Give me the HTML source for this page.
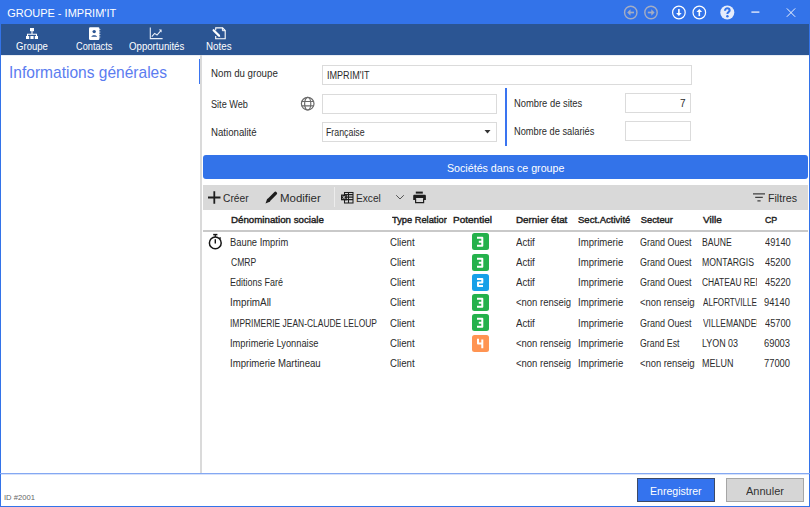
<!DOCTYPE html>
<html><head><meta charset="utf-8"><style>
html,body{margin:0;padding:0;}
body{width:810px;height:507px;overflow:hidden;position:relative;background:#fff;font-family:"Liberation Sans",sans-serif;}
.a{position:absolute;}
.t{position:absolute;white-space:nowrap;line-height:normal;}
.t span{display:inline-block;transform-origin:0 0;}
svg{position:absolute;}
</style></head><body>
<!-- window frame -->
<div class="a" style="left:0;top:0;width:810px;height:24px;background:#3373e9"></div>
<div class="a" style="left:0;top:24px;width:810px;height:31px;background:#2b5593"></div>
<div class="a" style="left:1px;top:55px;width:808px;height:1px;background:#e9edf4"></div>
<div class="a" style="left:0;top:0;width:1px;height:507px;background:#3373e9"></div>
<div class="a" style="left:809px;top:0;width:1px;height:507px;background:#3373e9"></div>
<div class="a" style="left:0;top:506px;width:810px;height:1px;background:#3373e9"></div>
<!-- dividers -->
<div class="a" style="left:200px;top:55px;width:2px;height:418px;background:#dadada"></div>
<div class="a" style="left:199px;top:59px;width:1px;height:25px;background:#3a74f0"></div>
<div class="a" style="left:0;top:473px;width:810px;height:1px;background:#84a8f2"></div>
<div class="a" style="left:1px;top:474px;width:808px;height:1px;background:#d6e2fb"></div>
<!-- inputs -->
<div class="a" style="left:322px;top:65px;width:368px;height:18px;border:1px solid #dbdbdb"></div>
<div class="a" style="left:322px;top:94px;width:173px;height:18px;border:1px solid #dbdbdb"></div>
<div class="a" style="left:322px;top:122px;width:173px;height:18px;border:1px solid #dbdbdb"></div>
<div class="a" style="left:625px;top:93px;width:64px;height:18px;border:1px solid #dbdbdb"></div>
<div class="a" style="left:625px;top:121px;width:64px;height:18px;border:1px solid #dbdbdb"></div>
<div class="a" style="left:505px;top:88px;width:2px;height:58px;background:#3a74f0"></div>
<svg style="left:484px;top:129px" width="7" height="5" viewBox="0 0 7 5"><path d="M0.5 1H6.5L3.5 4.5Z" fill="#333"/></svg>
<!-- blue bar -->
<div class="a" style="left:203px;top:155px;width:605px;height:24px;background:#3373e9;border-radius:3px"></div>
<!-- toolbar -->
<div class="a" style="left:203px;top:185px;width:605px;height:25px;background:#d9d9d9"></div>
<div class="a" style="left:334px;top:187px;width:1px;height:20px;background:#ececec"></div>
<!-- header line -->
<div class="a" style="left:203px;top:230px;width:605px;height:2px;background:#c9c9c9"></div>
<!-- buttons -->
<div class="a" style="left:637px;top:478px;width:76px;height:22px;background:#3473ee;border:1px solid #3d4a66"></div>
<div class="a" style="left:726px;top:478px;width:76px;height:22px;background:#d6d6d6;border:1px solid #a6a6a6"></div>

<!-- titlebar icons -->
<svg style="left:622px;top:4px" width="18" height="18" viewBox="0 0 18 18"><circle cx="8.75" cy="8.5" r="6.2" fill="none" stroke="#a4adc4" stroke-width="1.4"/><path d="M7 8.5H12" stroke="#a4adc4" stroke-width="1.7"/><path d="M5.2 8.5L8.5 5.3V11.7Z" fill="#a4adc4"/></svg>
<svg style="left:642px;top:4px" width="18" height="18" viewBox="0 0 18 18"><circle cx="9" cy="8.5" r="6.2" fill="none" stroke="#a4adc4" stroke-width="1.4"/><path d="M5.8 8.5H10.8" stroke="#a4adc4" stroke-width="1.7"/><path d="M12.6 8.5L9.3 5.3V11.7Z" fill="#a4adc4"/></svg>
<svg style="left:670px;top:4px" width="18" height="18" viewBox="0 0 18 18"><circle cx="8.9" cy="8.5" r="6.3" fill="none" stroke="#fff" stroke-width="1.2"/><path d="M8.9 4.9V10" stroke="#fff" stroke-width="1.6"/><path d="M8.9 11.9L6.1 9.1H11.7Z" fill="#fff"/></svg>
<svg style="left:690px;top:4px" width="18" height="18" viewBox="0 0 18 18"><circle cx="9.3" cy="8.5" r="6.3" fill="none" stroke="#fff" stroke-width="1.2"/><path d="M9.3 12.1V7" stroke="#fff" stroke-width="1.6"/><path d="M9.3 5.1L6.5 7.9H12.1Z" fill="#fff"/></svg>
<svg style="left:718px;top:4px" width="18" height="18" viewBox="0 0 18 18"><circle cx="9.3" cy="8.5" r="7" fill="#e6ecfb"/><path d="M7 6.7C7 5.1 8.1 4.3 9.3 4.3C10.6 4.3 11.6 5.1 11.6 6.4C11.6 8 9.4 8.1 9.4 9.9" fill="none" stroke="#3373e9" stroke-width="2.1"/><circle cx="9.4" cy="12.3" r="1.25" fill="#3373e9"/></svg>
<svg style="left:750px;top:8px" width="12" height="8" viewBox="0 0 12 8"><path d="M1.4 4.1H9.4" stroke="#e3eafb" stroke-width="1.4"/></svg>
<svg style="left:784px;top:6px" width="14" height="14" viewBox="0 0 14 14"><path d="M2.8 2.4L11.2 10.8M11.2 2.4L2.8 10.8" stroke="#f0f4fd" stroke-width="1"/></svg>
<!-- nav icons -->
<svg style="left:24px;top:26px" width="16" height="15" viewBox="0 0 16 15"><rect x="6" y="2" width="4" height="3.2" fill="#fff"/><path d="M8 5V8M3.5 10V8.2H12.5V10" fill="none" stroke="#fff" stroke-width="1.1"/><rect x="2" y="10" width="3.2" height="3" fill="#fff"/><rect x="6.4" y="10" width="3.2" height="3" fill="#fff"/><rect x="10.8" y="10" width="3.2" height="3" fill="#fff"/></svg>
<svg style="left:87px;top:26px" width="15" height="15" viewBox="0 0 15 15"><rect x="2" y="1.3" width="10.4" height="12.6" rx="1.2" fill="#fff"/><path d="M12.4 3.5H13.3M12.4 6H13.3M12.4 8.5H13.3M12.4 11H13.3" stroke="#fff" stroke-width="1"/><circle cx="7.2" cy="5.6" r="1.7" fill="#2b5593"/><path d="M4.3 10.8C4.3 8.7 10.1 8.7 10.1 10.8Z" fill="#2b5593"/></svg>
<svg style="left:148px;top:26px" width="16" height="15" viewBox="0 0 16 15"><path d="M2.3 1.6V12.6H14.6" fill="none" stroke="#e8eef8" stroke-width="1.1"/><path d="M3.8 10.6L6.6 7.4L9 9L12.7 4.8" fill="none" stroke="#e8eef8" stroke-width="1.1"/><path d="M10.8 3.4H13.6V6.4Z" fill="#e8eef8"/></svg>
<svg style="left:211px;top:26px" width="16" height="15" viewBox="0 0 16 15"><path d="M4.7 4.2V1.9H11.6L14.2 4.5V12.7H4.7V10" fill="none" stroke="#fff" stroke-width="1.1"/><path d="M11.4 1.9V4.7H14.2" fill="none" stroke="#fff" stroke-width="1"/><path d="M2.6 4.2L8 9.6" stroke="#fff" stroke-width="2.2" stroke-linecap="round"/><path d="M8 9.6L9.2 10.6" stroke="#fff" stroke-width="1"/></svg>
<!-- globe -->
<svg style="left:300px;top:96px" width="16" height="16" viewBox="0 0 16 16"><g fill="none" stroke="#6b6b6b" stroke-width="1.2"><circle cx="7.7" cy="7.7" r="6.3"/><ellipse cx="7.7" cy="7.7" rx="3.1" ry="6.3"/><path d="M1.6 5.5H13.8M1.6 9.9H13.8"/></g></svg>
<!-- toolbar icons -->
<svg style="left:206px;top:189px" width="16" height="16" viewBox="0 0 16 16"><path d="M8.3 2.2V14.8M2 8.5H14.5" stroke="#1e1e1e" stroke-width="1.8"/></svg>
<svg style="left:264px;top:190px" width="15" height="15" viewBox="0 0 15 15"><path d="M5.2 9.6L11.4 3.4" stroke="#1e1e1e" stroke-width="3.4" stroke-linecap="round"/><path d="M3.3 8.6L6.3 11.6L1.5 13.4Z" fill="#1e1e1e"/></svg>
<svg style="left:340px;top:191px" width="14" height="13" viewBox="0 0 14 13"><g fill="none" stroke="#1e1e1e" stroke-width="1.05"><rect x="4.5" y="1.5" width="8.5" height="10.5"/><path d="M4.5 3.6H13M4.5 6.1H13M4.5 8.6H13M8.5 1.5V12"/></g><rect x="1" y="3.5" width="5.8" height="5.8" fill="#1e1e1e"/><path d="M2.5 4.8L5.3 8M5.3 4.8L2.5 8" stroke="#d9d9d9" stroke-width="0.9"/></svg>
<svg style="left:394px;top:192px" width="12" height="9" viewBox="0 0 12 9"><path d="M2.2 3.2L6 7L9.8 3.2" fill="none" stroke="#555" stroke-width="1"/></svg>
<svg style="left:412px;top:190px" width="15" height="14" viewBox="0 0 15 14"><rect x="3.8" y="1.6" width="7" height="2" fill="#1e1e1e"/><path d="M2.6 4.8H12.6C13.4 4.8 13.9 5.3 13.9 6.1V10H11.3V8H3.9V10H1.2V6.1C1.2 5.3 1.7 4.8 2.6 4.8Z" fill="#1e1e1e"/><path d="M3.6 8.4V12.6H11.6V8.4" fill="none" stroke="#1e1e1e" stroke-width="1.2"/></svg>
<svg style="left:752px;top:192px" width="15" height="11" viewBox="0 0 15 11"><path d="M1 1.9H13M3.2 5.4H10.8M5.4 8.8H8.6" stroke="#404040" stroke-width="1.3"/></svg>
<!-- stopwatch -->
<svg style="left:206px;top:232px" width="18" height="19" viewBox="0 0 18 19"><g fill="none" stroke="#151515"><circle cx="9.3" cy="10.9" r="5.9" stroke-width="1.5"/><path d="M7.2 2.6H11.4" stroke-width="1.5"/><path d="M9.3 3V5" stroke-width="1.2"/><path d="M9.3 7.3V11.4" stroke-width="1.4"/><path d="M13.5 6.6L14.6 5.5" stroke-width="1.6"/></g></svg>

<svg style="position:absolute;left:472px;top:233px" width="17" height="17" viewBox="0 0 17 17"><rect x="0" y="0" width="17" height="17" rx="2.5" fill="#24b14b"/><path d="M5 4.8H10.3V12.7H5M6.8 8.75H10.3" fill="none" stroke="#fff" stroke-width="2" stroke-linejoin="round"/></svg><svg style="position:absolute;left:472px;top:254px" width="17" height="17" viewBox="0 0 17 17"><rect x="0" y="0" width="17" height="17" rx="2.5" fill="#24b14b"/><path d="M5 4.8H10.3V12.7H5M6.8 8.75H10.3" fill="none" stroke="#fff" stroke-width="2" stroke-linejoin="round"/></svg><svg style="position:absolute;left:472px;top:274px" width="17" height="17" viewBox="0 0 17 17"><rect x="0" y="0" width="17" height="17" rx="2.5" fill="#17a0e8"/><path d="M5 4.9H10.3V8.5H6V12.1H11" fill="none" stroke="#fff" stroke-width="2" stroke-linejoin="round"/></svg><svg style="position:absolute;left:472px;top:294px" width="17" height="17" viewBox="0 0 17 17"><rect x="0" y="0" width="17" height="17" rx="2.5" fill="#24b14b"/><path d="M5 4.8H10.3V12.7H5M6.8 8.75H10.3" fill="none" stroke="#fff" stroke-width="2" stroke-linejoin="round"/></svg><svg style="position:absolute;left:472px;top:314px" width="17" height="17" viewBox="0 0 17 17"><rect x="0" y="0" width="17" height="17" rx="2.5" fill="#24b14b"/><path d="M5 4.8H10.3V12.7H5M6.8 8.75H10.3" fill="none" stroke="#fff" stroke-width="2" stroke-linejoin="round"/></svg><svg style="position:absolute;left:472px;top:335px" width="17" height="17" viewBox="0 0 17 17"><rect x="0" y="0" width="17" height="17" rx="2.5" fill="#ff9452"/><path d="M6 3.8V8.6H10.3M10.3 4.6V13.2" fill="none" stroke="#fff" stroke-width="2" stroke-linejoin="round"/></svg>
<div class="t" style="left:7.15px;top:7px;font-size:11px"><span style="font-size:11px;color:#ffffff">GROUPE - IMPRIM'IT</span></div><div class="t" style="left:15.82px;top:41px;font-size:10px"><span style="font-size:10px;color:#ffffff;transform:scaleX(0.9571)">Groupe</span></div><div class="t" style="left:75.94px;top:41px;font-size:10px"><span style="font-size:10px;color:#ffffff;transform:scaleX(0.9208)">Contacts</span></div><div class="t" style="left:129.01px;top:41px;font-size:10px"><span style="font-size:10px;color:#ffffff;transform:scaleX(0.9654)">Opportunités</span></div><div class="t" style="left:205.72px;top:41px;font-size:10px"><span style="font-size:10px;color:#ffffff;transform:scaleX(0.9791)">Notes</span></div><div class="t" style="left:9.40px;top:63px;font-size:16.1px"><span style="font-size:16.1px;color:#5b7cf0;transform:scaleX(0.9651)">Informations générales</span></div><div class="t" style="left:210.98px;top:68px;font-size:10px"><span style="font-size:10px;color:#2b2b2b;transform:scaleX(0.9687)">Nom du groupe</span></div><div class="t" style="left:211.33px;top:99px;font-size:10px"><span style="font-size:10px;color:#2b2b2b;transform:scaleX(0.9135)">Site Web</span></div><div class="t" style="left:210.93px;top:127px;font-size:10px"><span style="font-size:10px;color:#2b2b2b;transform:scaleX(0.9655)">Nationalité</span></div><div class="t" style="left:513.95px;top:98px;font-size:10px"><span style="font-size:10px;color:#2b2b2b;transform:scaleX(0.9371)">Nombre de sites</span></div><div class="t" style="left:513.96px;top:126px;font-size:10px"><span style="font-size:10px;color:#2b2b2b;transform:scaleX(0.9275)">Nombre de salariés</span></div><div class="t" style="left:326.58px;top:70px;font-size:10px"><span style="font-size:10px;color:#2b2b2b;transform:scaleX(0.9062)">IMPRIM'IT</span></div><div class="t" style="left:325.70px;top:127px;font-size:10px"><span style="font-size:10px;color:#2b2b2b;transform:scaleX(0.8796)">Française</span></div><div class="t" style="left:679.90px;top:98px;font-size:10px"><span style="font-size:10px;color:#2b2b2b">7</span></div><div class="t" style="left:446.57px;top:162px;font-size:10.7px"><span style="font-size:10.7px;color:#ffffff;transform:scaleX(0.9977)">Sociétés dans ce groupe</span></div><div class="t" style="left:223.39px;top:192px;font-size:10.5px"><span style="font-size:10.5px;color:#2b2b2b;transform:scaleX(0.9768)">Créer</span></div><div class="t" style="left:280.28px;top:192px;font-size:10.5px"><span style="font-size:10.5px;color:#2b2b2b;transform:scaleX(1.0916)">Modifier</span></div><div class="t" style="left:356.19px;top:192px;font-size:10.5px"><span style="font-size:10.5px;color:#2b2b2b;transform:scaleX(0.9676)">Excel</span></div><div class="t" style="left:767.85px;top:192px;font-size:10.5px"><span style="font-size:10.5px;color:#2b2b2b;transform:scaleX(1.0136)">Filtres</span></div><div class="t" style="left:230.92px;top:215px;font-size:9.3px"><span style="font-size:9.3px;color:#222;-webkit-text-stroke:0.4px #222;transform:scaleX(1.0451)">Dénomination sociale</span></div><div class="t" style="left:392.01px;top:215px;font-size:9.3px;width:54.99px;height:12px;overflow:hidden"><span style="font-size:9.3px;color:#222;-webkit-text-stroke:0.4px #222">Type Relation</span></div><div class="t" style="left:453.10px;top:215px;font-size:9.3px"><span style="font-size:9.3px;color:#222;-webkit-text-stroke:0.4px #222;transform:scaleX(1.0754)">Potentiel</span></div><div class="t" style="left:515.61px;top:215px;font-size:9.3px"><span style="font-size:9.3px;color:#222;-webkit-text-stroke:0.4px #222;transform:scaleX(1.0571)">Dernier état</span></div><div class="t" style="left:578.32px;top:215px;font-size:9.3px"><span style="font-size:9.3px;color:#222;-webkit-text-stroke:0.4px #222;transform:scaleX(1.0226)">Sect.Activité</span></div><div class="t" style="left:640.83px;top:215px;font-size:9.3px"><span style="font-size:9.3px;color:#222;-webkit-text-stroke:0.4px #222">Secteur</span></div><div class="t" style="left:703.20px;top:215px;font-size:9.3px"><span style="font-size:9.3px;color:#222;-webkit-text-stroke:0.4px #222;transform:scaleX(1.0779)">Ville</span></div><div class="t" style="left:765.16px;top:215px;font-size:9.3px"><span style="font-size:9.3px;color:#222;-webkit-text-stroke:0.4px #222;transform:scaleX(0.9486)">CP</span></div><div class="t" style="left:230.35px;top:237px;font-size:10px"><span style="font-size:10px;color:#2b2b2b;transform:scaleX(0.9356)">Baune Imprim</span></div><div class="t" style="left:389.82px;top:237px;font-size:10px"><span style="font-size:10px;color:#2b2b2b;transform:scaleX(0.9646)">Client</span></div><div class="t" style="left:515.50px;top:237px;font-size:10px"><span style="font-size:10px;color:#2b2b2b;transform:scaleX(0.9656)">Actif</span></div><div class="t" style="left:577.64px;top:237px;font-size:10px"><span style="font-size:10px;color:#2b2b2b;transform:scaleX(0.9572)">Imprimerie</span></div><div class="t" style="left:640.35px;top:237px;font-size:10px"><span style="font-size:10px;color:#2b2b2b;transform:scaleX(0.9018)">Grand Ouest</span></div><div class="t" style="left:702.11px;top:237px;font-size:10px"><span style="font-size:10px;color:#2b2b2b;transform:scaleX(0.8623)">BAUNE</span></div><div class="t" style="left:764.62px;top:237px;font-size:10px"><span style="font-size:10px;color:#2b2b2b;transform:scaleX(0.9249)">49140</span></div><div class="t" style="left:230.67px;top:257px;font-size:10px"><span style="font-size:10px;color:#2b2b2b;transform:scaleX(0.8534)">CMRP</span></div><div class="t" style="left:389.82px;top:257px;font-size:10px"><span style="font-size:10px;color:#2b2b2b;transform:scaleX(0.9646)">Client</span></div><div class="t" style="left:515.50px;top:257px;font-size:10px"><span style="font-size:10px;color:#2b2b2b;transform:scaleX(0.9656)">Actif</span></div><div class="t" style="left:577.64px;top:257px;font-size:10px"><span style="font-size:10px;color:#2b2b2b;transform:scaleX(0.9572)">Imprimerie</span></div><div class="t" style="left:640.35px;top:257px;font-size:10px"><span style="font-size:10px;color:#2b2b2b;transform:scaleX(0.9018)">Grand Ouest</span></div><div class="t" style="left:702.10px;top:257px;font-size:10px"><span style="font-size:10px;color:#2b2b2b;transform:scaleX(0.8696)">MONTARGIS</span></div><div class="t" style="left:764.62px;top:257px;font-size:10px"><span style="font-size:10px;color:#2b2b2b;transform:scaleX(0.9249)">45200</span></div><div class="t" style="left:230.38px;top:277px;font-size:10px"><span style="font-size:10px;color:#2b2b2b;transform:scaleX(0.8986)">Editions Faré</span></div><div class="t" style="left:389.82px;top:277px;font-size:10px"><span style="font-size:10px;color:#2b2b2b;transform:scaleX(0.9646)">Client</span></div><div class="t" style="left:515.50px;top:277px;font-size:10px"><span style="font-size:10px;color:#2b2b2b;transform:scaleX(0.9656)">Actif</span></div><div class="t" style="left:577.64px;top:277px;font-size:10px"><span style="font-size:10px;color:#2b2b2b;transform:scaleX(0.9572)">Imprimerie</span></div><div class="t" style="left:640.35px;top:277px;font-size:10px"><span style="font-size:10px;color:#2b2b2b;transform:scaleX(0.9018)">Grand Ouest</span></div><div class="t" style="left:702.38px;top:277px;font-size:10px;width:55.02px;height:13px;overflow:hidden"><span style="font-size:10px;color:#2b2b2b;transform:scaleX(0.8386)">CHATEAU RENARD</span></div><div class="t" style="left:764.62px;top:277px;font-size:10px"><span style="font-size:10px;color:#2b2b2b;transform:scaleX(0.9249)">45220</span></div><div class="t" style="left:230.21px;top:297px;font-size:10px"><span style="font-size:10px;color:#2b2b2b;transform:scaleX(0.9840)">ImprimAll</span></div><div class="t" style="left:389.82px;top:297px;font-size:10px"><span style="font-size:10px;color:#2b2b2b;transform:scaleX(0.9646)">Client</span></div><div class="t" style="left:515.62px;top:297px;font-size:10px;width:54.98px;height:13px;overflow:hidden"><span style="font-size:10px;color:#2b2b2b;transform:scaleX(0.9486)">&lt;non renseigné&gt;</span></div><div class="t" style="left:577.64px;top:297px;font-size:10px"><span style="font-size:10px;color:#2b2b2b;transform:scaleX(0.9572)">Imprimerie</span></div><div class="t" style="left:640.42px;top:297px;font-size:10px;width:54.58px;height:13px;overflow:hidden"><span style="font-size:10px;color:#2b2b2b;transform:scaleX(0.9381)">&lt;non renseigné&gt;</span></div><div class="t" style="left:702.80px;top:297px;font-size:10px"><span style="font-size:10px;color:#2b2b2b;transform:scaleX(0.8089)">ALFORTVILLE</span></div><div class="t" style="left:764.43px;top:297px;font-size:10px"><span style="font-size:10px;color:#2b2b2b;transform:scaleX(0.9317)">94140</span></div><div class="t" style="left:230.34px;top:318px;font-size:10px"><span style="font-size:10px;color:#2b2b2b;transform:scaleX(0.8449)">IMPRIMERIE JEAN-CLAUDE LELOUP</span></div><div class="t" style="left:389.82px;top:318px;font-size:10px"><span style="font-size:10px;color:#2b2b2b;transform:scaleX(0.9646)">Client</span></div><div class="t" style="left:515.50px;top:318px;font-size:10px"><span style="font-size:10px;color:#2b2b2b;transform:scaleX(0.9656)">Actif</span></div><div class="t" style="left:577.64px;top:318px;font-size:10px"><span style="font-size:10px;color:#2b2b2b;transform:scaleX(0.9572)">Imprimerie</span></div><div class="t" style="left:640.35px;top:318px;font-size:10px"><span style="font-size:10px;color:#2b2b2b;transform:scaleX(0.9018)">Grand Ouest</span></div><div class="t" style="left:702.80px;top:318px;font-size:10px;width:54.60px;height:13px;overflow:hidden"><span style="font-size:10px;color:#2b2b2b;transform:scaleX(0.8415)">VILLEMANDEUR</span></div><div class="t" style="left:764.62px;top:318px;font-size:10px"><span style="font-size:10px;color:#2b2b2b;transform:scaleX(0.9249)">45700</span></div><div class="t" style="left:230.26px;top:338px;font-size:10px"><span style="font-size:10px;color:#2b2b2b;transform:scaleX(0.9291)">Imprimerie Lyonnaise</span></div><div class="t" style="left:389.82px;top:338px;font-size:10px"><span style="font-size:10px;color:#2b2b2b;transform:scaleX(0.9646)">Client</span></div><div class="t" style="left:515.62px;top:338px;font-size:10px;width:54.98px;height:13px;overflow:hidden"><span style="font-size:10px;color:#2b2b2b;transform:scaleX(0.9486)">&lt;non renseigné&gt;</span></div><div class="t" style="left:577.64px;top:338px;font-size:10px"><span style="font-size:10px;color:#2b2b2b;transform:scaleX(0.9572)">Imprimerie</span></div><div class="t" style="left:640.36px;top:338px;font-size:10px"><span style="font-size:10px;color:#2b2b2b;transform:scaleX(0.8778)">Grand Est</span></div><div class="t" style="left:702.09px;top:338px;font-size:10px"><span style="font-size:10px;color:#2b2b2b;transform:scaleX(0.8922)">LYON 03</span></div><div class="t" style="left:764.33px;top:338px;font-size:10px"><span style="font-size:10px;color:#2b2b2b;transform:scaleX(0.9352)">69003</span></div><div class="t" style="left:230.24px;top:358px;font-size:10px"><span style="font-size:10px;color:#2b2b2b;transform:scaleX(0.9601)">Imprimerie Martineau</span></div><div class="t" style="left:389.82px;top:358px;font-size:10px"><span style="font-size:10px;color:#2b2b2b;transform:scaleX(0.9646)">Client</span></div><div class="t" style="left:515.62px;top:358px;font-size:10px;width:54.98px;height:13px;overflow:hidden"><span style="font-size:10px;color:#2b2b2b;transform:scaleX(0.9486)">&lt;non renseigné&gt;</span></div><div class="t" style="left:577.64px;top:358px;font-size:10px"><span style="font-size:10px;color:#2b2b2b;transform:scaleX(0.9572)">Imprimerie</span></div><div class="t" style="left:640.42px;top:358px;font-size:10px;width:54.58px;height:13px;overflow:hidden"><span style="font-size:10px;color:#2b2b2b;transform:scaleX(0.9381)">&lt;non renseigné&gt;</span></div><div class="t" style="left:702.08px;top:358px;font-size:10px"><span style="font-size:10px;color:#2b2b2b;transform:scaleX(0.8960)">MELUN</span></div><div class="t" style="left:764.33px;top:358px;font-size:10px"><span style="font-size:10px;color:#2b2b2b;transform:scaleX(0.9352)">77000</span></div><div class="t" style="left:4.21px;top:493px;font-size:7.6px"><span style="font-size:7.6px;color:#666;transform:scaleX(1.0064)">ID #2001</span></div><div class="t" style="left:649.86px;top:485px;font-size:10.8px"><span style="font-size:10.8px;color:#ffffff;transform:scaleX(0.9766)">Enregistrer</span></div><div class="t" style="left:746.00px;top:485px;font-size:10.8px"><span style="font-size:10.8px;color:#333;transform:scaleX(1.0193)">Annuler</span></div>
</body></html>
